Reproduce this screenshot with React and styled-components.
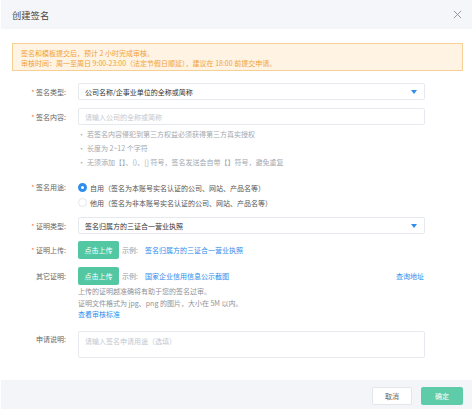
import styled, { createGlobalStyle } from "styled-components";

const GlobalStyle = createGlobalStyle`
  html, body {
    margin: 0;
    padding: 0;
    background: #ffffff;
  }
  body {
    font-family: "Noto Sans CJK SC", "Noto Sans", sans-serif;
    color: #333;
  }
`;

const BLUE = "#2e8ded";
const GREEN = "#52c7a2";

export default function App() {
  return (
    <>
      <GlobalStyle />
      <Modal>
        <Header>
          <Title>创建签名</Title>
          <Close aria-label="close">
            <svg width="9" height="9" viewBox="0 0 10 10">
              <path d="M1 1L9 9M9 1L1 9" stroke="#8a8f99" strokeWidth="1" />
            </svg>
          </Close>
        </Header>

        <Body>
          <Notice>
            <p>签名和模板提交后，预计 2 小时完成审核。</p>
            <p>审核时间：周一至周日 9:00-23:00（法定节假日顺延），建议在 18:00 前提交申请。</p>
          </Notice>

          <Form>
            <Item $mb={8}>
              <Label $required>签名类型:</Label>
              <Select>
                <span>公司名称/企事业单位的全称或简称</span>
                <Caret />
              </Select>
            </Item>

            <Item $mb={2}>
              <Label $required>签名内容:</Label>
              <Input>请输入公司的全称或简称</Input>
            </Item>

            <Item $mb={11}>
              <Label />
              <Hints>
                <li>若签名内容侵犯到第三方权益必须获得第三方真实授权</li>
                <li>长度为 2~12 个字符</li>
                <li>无须添加【】、()、[] 符号，签名发送会自带【】符号，避免重复</li>
              </Hints>
            </Item>

            <Item $mb={7} $top>
              <Label $required $line={15}>签名用途:</Label>
              <RadioGroup>
                <Radio>
                  <RadioDot $checked />
                  自用（签名为本账号实名认证的公司、网站、产品名等）
                </Radio>
                <Radio>
                  <RadioDot />
                  他用（签名为非本账号实名认证的公司、网站、产品名等）
                </Radio>
              </RadioGroup>
            </Item>

            <Item $mb={7}>
              <Label $required>证明类型:</Label>
              <Select>
                <span>签名归属方的三证合一营业执照</span>
                <Caret />
              </Select>
            </Item>

            <Item $mb={8}>
              <Label $required>证明上传:</Label>
              <UploadRow>
                <UploadButton>点击上传</UploadButton>
                <Muted>示例:</Muted>
                <Link>签名归属方的三证合一营业执照</Link>
              </UploadRow>
            </Item>

            <Item $mb={1}>
              <Label>其它证明:</Label>
              <UploadRow>
                <UploadButton>点击上传</UploadButton>
                <Muted>示例:</Muted>
                <Link>国家企业信用信息公示截图</Link>
                <Link $push>查询地址</Link>
              </UploadRow>
            </Item>

            <Item $mb={10}>
              <Label />
              <Help>
                <p>上传的证明越准确将有助于您的签名过审。</p>
                <p>证明文件格式为 jpg、png 的图片，大小在 5M 以内。</p>
                <Link as="p">查看审核标准</Link>
              </Help>
            </Item>

            <Item $mb={0} $top>
              <Label $line={17} $pt={0}>申请说明:</Label>
              <TextArea>请输入签名申请用途（选填）</TextArea>
            </Item>
          </Form>
        </Body>

        <Footer>
          <Button>取消</Button>
          <Button $primary>确定</Button>
        </Footer>
      </Modal>
    </>
  );
}

const Modal = styled.div`
  width: 471px;
  margin-left: 1px;
  height: 409px;
  display: flex;
  flex-direction: column;
  background: #fff;
`;

const Header = styled.div`
  height: 29px;
  display: flex;
  align-items: center;
  justify-content: space-between;
  padding: 0 10px 0 11px;
  background: #f4f6f9;
`;

const Title = styled.h3`
  margin: 0;
  font-size: 9.3px;
  font-weight: 400;
  color: #444;
`;

const Close = styled.span`
  display: flex;
  align-items: center;
`;

const Body = styled.div`
  flex: 1;
  padding: 14px 9px 0 11px;
`;

const Notice = styled.div`
  height: 28px;
  box-sizing: border-box;
  padding: 4px 8px;
  background: #fff3e3;
  border: 1px solid #f6cf93;
  color: #f0a23a;
  font-size: 7px;
  line-height: 10px;

  p {
    margin: 0;
    white-space: nowrap;
  }
`;

const Form = styled.div`
  margin-top: 12px;
  display: flex;
  flex-direction: column;
  width: 413px;
`;

const Item = styled.div`
  display: flex;
  align-items: ${(p) => (p.$top ? "flex-start" : "center")};
  margin-bottom: ${(p) => p.$mb}px;
`;

const Label = styled.label`
  width: 54px;
  flex: none;
  margin-right: 12px;
  text-align: right;
  font-size: 7px;
  color: #666;
  line-height: ${(p) => (p.$line ? `${p.$line}px` : "normal")};
  padding-top: ${(p) => (p.$line === 17 ? "0" : "0")};
  white-space: nowrap;

  &::before {
    content: ${(p) => (p.$required ? '"* "' : '""')};
    color: #f07a4a;
  }
`;

const Field = styled.div`
  width: 347px;
  box-sizing: border-box;
  border: 1px solid #e6e9ee;
  border-radius: 2px;
  background: #fff;
  font-size: 7px;
  padding: 0 6px;
`;

const Select = styled(Field)`
  height: 17px;
  display: flex;
  align-items: center;
  justify-content: space-between;
  color: #333;
`;

const Caret = styled.span`
  width: 0;
  height: 0;
  margin-right: 1px;
  border-left: 3.5px solid transparent;
  border-right: 3.5px solid transparent;
  border-top: 4px solid ${BLUE};
`;

const Input = styled(Field)`
  height: 17px;
  display: flex;
  align-items: center;
  color: #c3c7cf;
`;

const TextArea = styled(Field)`
  height: 27px;
  padding-top: 4px;
  color: #c3c7cf;
`;

const Hints = styled.ul`
  margin: 0;
  padding: 0;
  list-style: none;
  font-size: 7px;
  line-height: 14px;
  color: #a3a7ae;

  li::before {
    content: "•";
    margin-right: 2px;
  }
`;

const RadioGroup = styled.div`
  display: flex;
  flex-direction: column;
`;

const Radio = styled.div`
  display: flex;
  align-items: center;
  height: 15px;
  font-size: 7px;
  color: #555;
`;

const RadioDot = styled.span`
  width: 9px;
  height: 9px;
  box-sizing: border-box;
  border-radius: 50%;
  margin-right: 3px;
  border: ${(p) => (p.$checked ? `3px solid ${BLUE}` : "1px solid #e3e6eb")};
  background: #fff;
`;

const UploadRow = styled.div`
  width: 347px;
  display: flex;
  align-items: center;
  font-size: 7px;
`;

const UploadButton = styled.span`
  width: 41px;
  height: 18px;
  display: flex;
  align-items: center;
  justify-content: center;
  border-radius: 2px;
  background: ${GREEN};
  color: #fff;
  margin-right: 3px;
`;

const Muted = styled.span`
  color: #999;
  margin-right: 7px;
`;

const Link = styled.span`
  color: ${BLUE};
  margin: 0;
  margin-left: ${(p) => (p.$push ? "auto" : "0")};
  margin-right: ${(p) => (p.$push ? "1px" : "0")};
`;

const Help = styled.div`
  font-size: 7px;
  line-height: 11.5px;
  color: #8f939a;

  p {
    margin: 0;
  }
`;

const Footer = styled.div`
  height: 29px;
  box-sizing: border-box;
  padding: 7px 9px 0 0;
  display: flex;
  justify-content: flex-end;
  gap: 9px;
  background: #f3f5f8;
`;

const Button = styled.span`
  width: ${(p) => (p.$primary ? 42 : 40)}px;
  height: 18px;
  box-sizing: border-box;
  display: flex;
  align-items: center;
  justify-content: center;
  border-radius: 2px;
  font-size: 7px;
  color: ${(p) => (p.$primary ? "#fff" : "#666")};
  background: ${(p) => (p.$primary ? "#5fcca9" : "#fff")};
  border: 1px solid ${(p) => (p.$primary ? "#5fcca9" : "#e3e6eb")};
`;
